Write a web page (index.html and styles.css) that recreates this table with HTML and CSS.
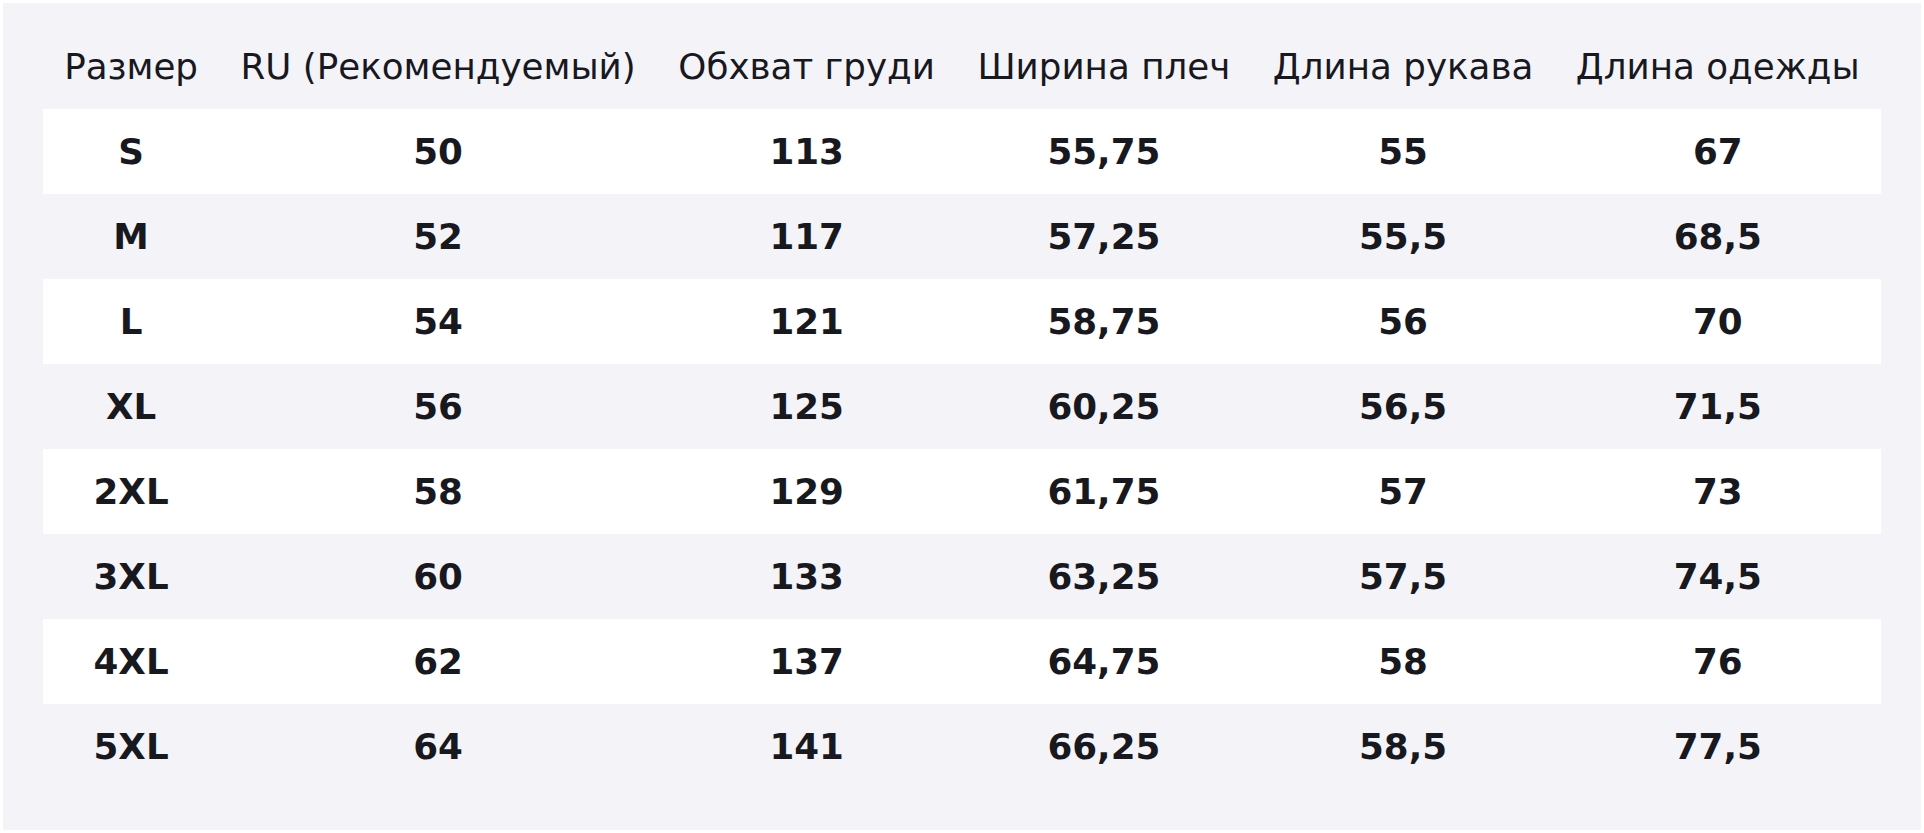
FILE: index.html
```html
<!DOCTYPE html>
<html lang="ru">
<head>
<meta charset="utf-8">
<title>Таблица размеров</title>
<link rel="stylesheet" href="styles.css">
</head>
<body>
<div class="page">
  <div class="panel">
    <table class="sizes">
      <thead>
        <tr>
          <th>Размер</th>
          <th>RU (Рекомендуемый)</th>
          <th>Обхват груди</th>
          <th>Ширина плеч</th>
          <th>Длина рукава</th>
          <th>Длина одежды</th>
        </tr>
      </thead>
      <tbody>
        <tr class="odd"><td>S</td><td>50</td><td>113</td><td>55,75</td><td>55</td><td>67</td></tr>
        <tr><td>M</td><td>52</td><td>117</td><td>57,25</td><td>55,5</td><td>68,5</td></tr>
        <tr class="odd"><td>L</td><td>54</td><td>121</td><td>58,75</td><td>56</td><td>70</td></tr>
        <tr><td>XL</td><td>56</td><td>125</td><td>60,25</td><td>56,5</td><td>71,5</td></tr>
        <tr class="odd"><td>2XL</td><td>58</td><td>129</td><td>61,75</td><td>57</td><td>73</td></tr>
        <tr><td>3XL</td><td>60</td><td>133</td><td>63,25</td><td>57,5</td><td>74,5</td></tr>
        <tr class="odd"><td>4XL</td><td>62</td><td>137</td><td>64,75</td><td>58</td><td>76</td></tr>
        <tr><td>5XL</td><td>64</td><td>141</td><td>66,25</td><td>58,5</td><td>77,5</td></tr>
      </tbody>
    </table>
  </div>
</div>
</body>
</html>
```
FILE: styles.css
```css
html, body {
  margin: 0;
  padding: 0;
  background: #ffffff;
}

.page {
  padding: 3px;
}

.panel {
  background: #f4f4f8;
  padding: 21.4px 40px 40.6px;
  font-family: "DejaVu Sans", sans-serif;
  font-size: 35.7px;
  color: #18181f;
}

.sizes {
  width: 100%;
  border-collapse: collapse;
  border-spacing: 0;
  table-layout: auto;
}

.sizes th,
.sizes td {
  padding: 21.5px 21px;
  text-align: center;
  white-space: nowrap;
  line-height: 42px;
}

.sizes th {
  font-weight: normal;
}

.sizes td {
  font-weight: bold;
}

.sizes tr.odd td {
  background: #ffffff;
}
```
